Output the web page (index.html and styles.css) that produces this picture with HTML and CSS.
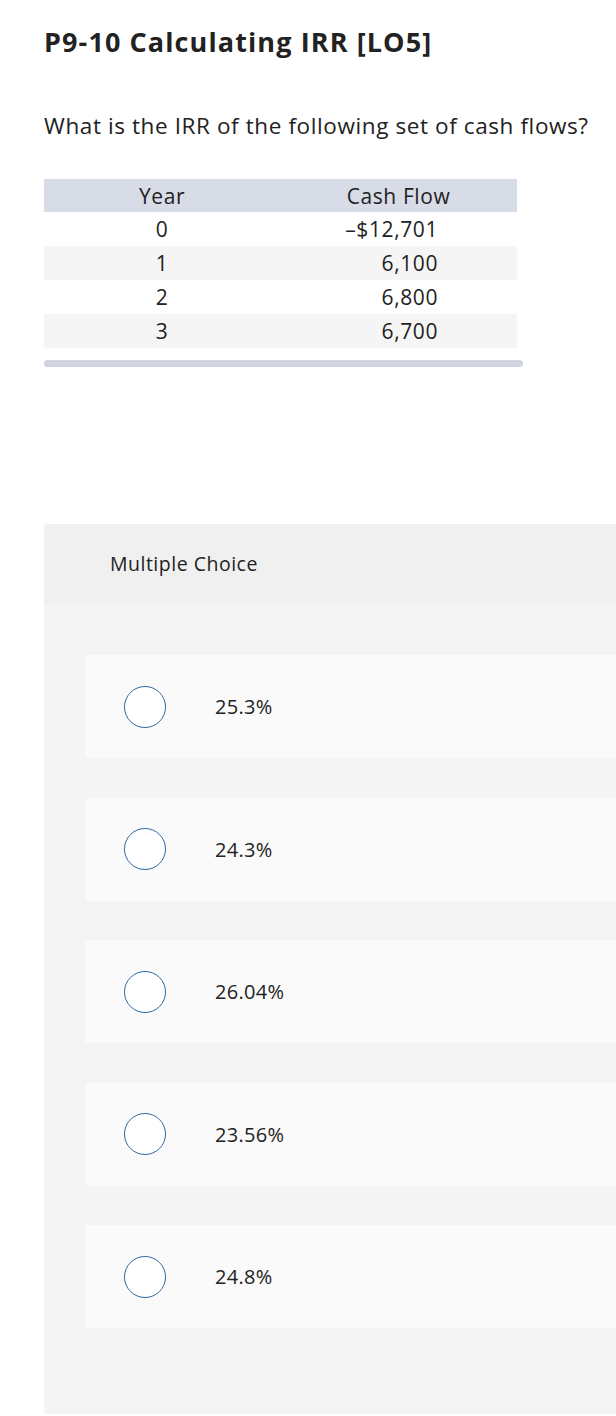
FILE: index.html
```html
<!DOCTYPE html>
<html>
<head>
<meta charset="utf-8">
<link rel="stylesheet" href="styles.css">
</head>
<body>
<div class="page">
  <h1 class="title">P9-10 Calculating IRR [LO5]</h1>
  <p class="question">What is the IRR of the following set of cash flows?</p>
  <div class="table-wrap">
    <table class="cf">
      <thead>
        <tr><th class="c-year">Year</th><th class="c-cash">Cash Flow</th></tr>
      </thead>
      <tbody>
        <tr><td class="c-year">0</td><td class="c-val">&ndash;$12,701</td></tr>
        <tr class="alt"><td class="c-year">1</td><td class="c-val">6,100</td></tr>
        <tr><td class="c-year">2</td><td class="c-val">6,800</td></tr>
        <tr class="alt"><td class="c-year">3</td><td class="c-val">6,700</td></tr>
      </tbody>
    </table>
    <div class="scrollbar"></div>
  </div>

  <section class="mc">
    <div class="mc-head">Multiple Choice</div>
    <div class="mc-body">
      <div class="opt"><span class="radio"></span><span class="opt-text">25.3%</span></div>
      <div class="opt"><span class="radio"></span><span class="opt-text">24.3%</span></div>
      <div class="opt"><span class="radio"></span><span class="opt-text">26.04%</span></div>
      <div class="opt"><span class="radio"></span><span class="opt-text">23.56%</span></div>
      <div class="opt"><span class="radio"></span><span class="opt-text">24.8%</span></div>
    </div>
  </section>
</div>
</body>
</html>
```

FILE: styles.css
```css
html, body {
  margin: 0;
  padding: 0;
  background: #ffffff;
  overflow: hidden;
}
body {
  font-family: "Open Sans", "Lato", "Liberation Sans", sans-serif;
  color: #222222;
}
.page {
  padding-left: 44px;
  padding-top: 26px;
}
.title {
  margin: 0;
  font-size: 27px;
  line-height: 32px;
  letter-spacing: 1.1px;
  font-weight: 700;
  color: #222222;
}
.question {
  margin: 53px 0 0 0;
  font-size: 22.5px;
  line-height: 30px;
  letter-spacing: 0.6px;
  color: #222222;
}
.table-wrap {
  margin-top: 38px;
  width: 479px;
}
.cf {
  border-collapse: collapse;
  width: 473px;
  font-size: 21px;
  letter-spacing: 0.6px;
}
.cf th, .cf td {
  padding: 0;
  height: 34px;
  font-weight: 400;
  color: #222222;
}
.cf thead tr {
  background: #d8dce6;
}
.cf th {
  height: 33px;
}
.c-year {
  width: 236px;
  text-align: center;
}
.c-cash {
  text-align: center;
}
.c-val {
  text-align: right;
  padding-right: 79px !important;
}
.cf tr.alt {
  background: #f5f5f5;
}
.scrollbar {
  margin-top: 12px;
  height: 7px;
  border-radius: 4px;
  background: #cfd4df;
}
.mc {
  margin-top: 157px;
  background: #f4f4f4;
  border-radius: 4px 0 0 4px;
  height: 890px;
}
.mc-head {
  height: 79px;
  background: #f0f0f0;
  border-radius: 4px 0 0 0;
  padding-left: 66px;
  display: flex;
  align-items: center;
  font-size: 19.5px;
  letter-spacing: 0.5px;
  color: #222222;
}
.mc-body {
  padding: 52px 0 86px 41px;
  display: flex;
  flex-direction: column;
  gap: 39.5px;
}
.opt {
  height: 103px;
  background: #fafafa;
  border-radius: 4px 0 0 4px;
  display: flex;
  align-items: center;
  padding-left: 39px;
}
.radio {
  width: 42px;
  height: 42px;
  box-sizing: border-box;
  border: 1.5px solid #2f6aa3;
  border-radius: 50%;
  background: #ffffff;
  flex: none;
}
.opt-text {
  margin-left: 49px;
  font-size: 20px;
  letter-spacing: 0.3px;
  color: #222222;
}
```
